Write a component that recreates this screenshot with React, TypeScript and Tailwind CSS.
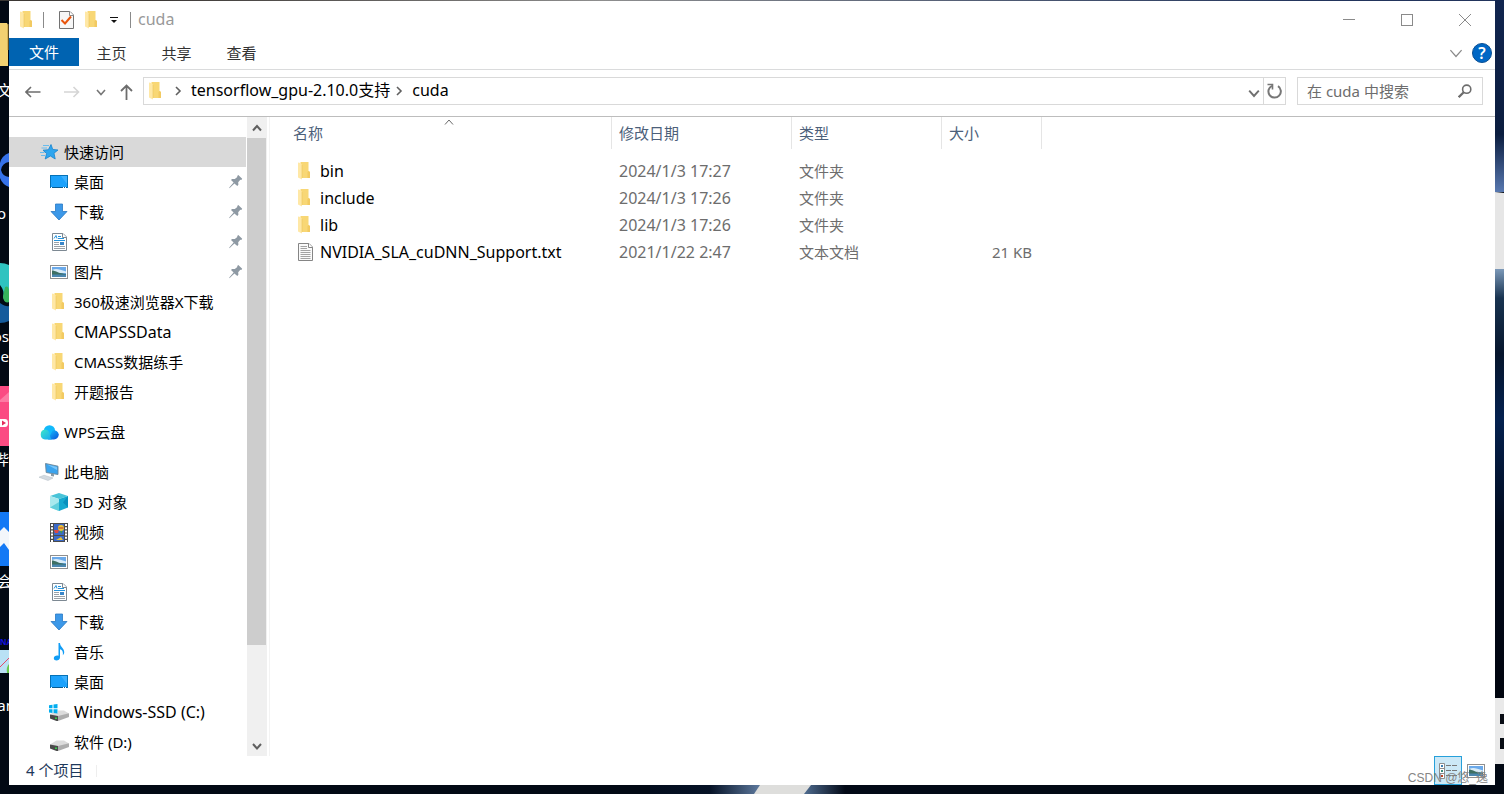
import type { ReactNode } from 'react';

type IconName =
  | 'star'
  | 'desktop'
  | 'download'
  | 'document'
  | 'picture'
  | 'folder'
  | 'cloud'
  | 'computer'
  | 'cube'
  | 'video'
  | 'music'
  | 'systemDrive'
  | 'drive';

interface NavItem {
  label: string;
  icon: IconName;
  pinned?: boolean;
  latin?: boolean;
}

interface NavGroup {
  root: NavItem;
  active?: boolean;
  children: NavItem[];
}

interface FileEntry {
  name: string;
  modified: string;
  type: string;
  size: string;
  isFolder: boolean;
}

const navGroups: NavGroup[] = [
  {
    root: { label: '快速访问', icon: 'star' },
    active: true,
    children: [
      { label: '桌面', icon: 'desktop', pinned: true },
      { label: '下载', icon: 'download', pinned: true },
      { label: '文档', icon: 'document', pinned: true },
      { label: '图片', icon: 'picture', pinned: true },
      { label: '360极速浏览器X下载', icon: 'folder' },
      { label: 'CMAPSSData', icon: 'folder', latin: true },
      { label: 'CMASS数据练手', icon: 'folder' },
      { label: '开题报告', icon: 'folder' },
    ],
  },
  { root: { label: 'WPS云盘', icon: 'cloud' }, children: [] },
  {
    root: { label: '此电脑', icon: 'computer' },
    children: [
      { label: '3D 对象', icon: 'cube' },
      { label: '视频', icon: 'video' },
      { label: '图片', icon: 'picture' },
      { label: '文档', icon: 'document' },
      { label: '下载', icon: 'download' },
      { label: '音乐', icon: 'music' },
      { label: '桌面', icon: 'desktop' },
      { label: 'Windows-SSD (C:)', icon: 'systemDrive', latin: true },
      { label: '软件 (D:)', icon: 'drive' },
    ],
  },
];

const files: FileEntry[] = [
  { name: 'bin', modified: '2024/1/3 17:27', type: '文件夹', size: '', isFolder: true },
  { name: 'include', modified: '2024/1/3 17:26', type: '文件夹', size: '', isFolder: true },
  { name: 'lib', modified: '2024/1/3 17:26', type: '文件夹', size: '', isFolder: true },
  { name: 'NVIDIA_SLA_cuDNN_Support.txt', modified: '2021/1/22 2:47', type: '文本文档', size: '21 KB', isFolder: false },
];

const ribbonTabs = ['主页', '共享', '查看'];

function FolderIcon() {
  return (
    <svg width="13" height="18" viewBox="0 0 13 18" aria-hidden="true">
      <path d="M2.5 0H10.5V9L12 10V16H3Z" fill="#f8d775" />
      <path d="M10.5 9 12 10V16H9.5V10Z" fill="#f2ca62" />
      <path d="M0 .5 2.5 1 4 3V17.5L0 15.5Z" fill="#ffe8a6" />
      <path d="M4 3V16" stroke="#e9c25c" strokeWidth=".6" />
    </svg>
  );
}

function TextFileIcon() {
  return (
    <svg width="16" height="18" viewBox="0 0 16 18" aria-hidden="true">
      <path d="M.5.5H11L14.5 4V17.5H.5Z" fill="#fafafa" stroke="#858585" />
      <path d="M10.5.5V4.5H14.5" fill="#fff" stroke="#858585" />
      <path d="M2.5 3.5H9M2.5 5.5H9M2.5 7.5H12.5M2.5 9.5H12.5M2.5 11.5H12.5M2.5 13.5H12.5M2.5 15.5H12.5" stroke="#a3a3a3" />
    </svg>
  );
}

function PictureIcon() {
  return (
    <svg width="18" height="14" viewBox="0 0 18 14" aria-hidden="true">
      <rect x=".5" y=".5" width="17" height="13" fill="#fff" stroke="#8f8f8f" />
      <rect x="2" y="2" width="14" height="10" fill="#6aa9ea" />
      <path d="M2 5C6 3 9 4 16 6.500V8H2Z" fill="#d8ebf8" />
      <path d="M2 5.500C5 5.500 8 8 14 8.700L16 9V10H2Z" fill="#3d6f63" />
      <path d="M2 9.500H16V12H2Z" fill="#4b87b0" />
    </svg>
  );
}

function DriveShape() {
  return (
    <>
      <path d="M0 11.5 6.5 7.500H14L19 10.500 7 14.500Z" fill="#dcdcdc" />
      <path d="M0 11.500 8 13V18H6.500L0 15.500Z" fill="#4a4a4a" />
      <path d="M8 13 19 10.300V14L8 18Z" fill="#adadad" />
      <rect x="5" y="14.500" width="2" height="1.500" fill="#35d04a" />
    </>
  );
}

const navIcons: Record<IconName, ReactNode> = {
  folder: (
    <span className="flex w-full pl-[2px]">
      <FolderIcon />
    </span>
  ),
  picture: <PictureIcon />,
  star: (
    <svg width="18" height="18" viewBox="0 0 18 18" aria-hidden="true">
      <path d="M11 1.5 12.7 6.4 18 7 14 10.2 15.2 16 10.4 13 5.2 16 6.6 10.5 3 7.2 8.4 6.7Z" fill="#2da5ee" stroke="#1583cf" strokeWidth=".8" />
      <path d="M3 2.500H9M1.500 5H7M0 9.500H4.500M1 12.500H5" stroke="#5bb9ef" strokeWidth=".9" />
    </svg>
  ),
  desktop: (
    <svg width="18" height="14" viewBox="0 0 18 14" aria-hidden="true">
      <rect x=".5" y=".5" width="17" height="12" fill="#1ba1fb" stroke="#0572b7" />
      <path d="M11 1H17V9Z" fill="#3cb1ff" />
      <path d="M1 12.500H17" stroke="#075a91" />
      <path d="M1 12.500H2M13 12.500H14M15 12.500H16" stroke="#fff" />
    </svg>
  ),
  download: (
    <svg width="18" height="18" viewBox="0 0 18 18" aria-hidden="true">
      <path d="M5.5 1H12.5V8.5H17L9 17 1 8.5H5.5Z" fill="#3c98e8" stroke="#2878c4" strokeWidth=".8" />
    </svg>
  ),
  document: (
    <svg width="18" height="18" viewBox="0 0 18 18" aria-hidden="true">
      <path d="M2.5.5H13L16.500 4V17.500H2.500Z" fill="#fff" stroke="#7d8993" />
      <path d="M12.500.5V4.500H16.500" fill="#fff" stroke="#7d8993" />
      <path d="M4 5.500 6 2.500 7 5.500M8 3.500H11M8 5.500H14M4 7.500H15" fill="none" stroke="#2493dc" />
      <path d="M4 9.500H9M4 11.500H9M4 13.500H15M4 15.500H15" stroke="#9aa1a7" />
      <rect x="10" y="9" width="4" height="3" fill="#3a86c8" />
    </svg>
  ),
  cloud: (
    <svg width="19" height="15" viewBox="0 0 19 15" className="shrink-0" aria-hidden="true">
      <defs>
        <linearGradient id="cloudLeft" x1="0" y1="0" x2="1" y2="1">
          <stop offset="0" stopColor="#3ce6c8" />
          <stop offset="1" stopColor="#16a7f5" />
        </linearGradient>
        <linearGradient id="cloudRight" x1="0" y1="0" x2="1" y2="1">
          <stop offset="0" stopColor="#14c3ff" />
          <stop offset="1" stopColor="#0a4fd8" />
        </linearGradient>
      </defs>
      <circle cx="9.5" cy="5.8" r="5.6" fill="#12b9fb" />
      <path d="M8 14.5 12.5 5.5A5 5 0 0 1 18.8 9.6 5 5 0 0 1 14 14.5Z" fill="url(#cloudRight)" />
      <path d="M5 4.6A5 5 0 0 0 5 14.5H12C9.8 13 10.2 9.8 9.5 8A5 5 0 0 0 5 4.6Z" fill="url(#cloudLeft)" />
    </svg>
  ),
  computer: (
    <svg width="20" height="18" viewBox="0 0 20 18" className="shrink-0" aria-hidden="true">
      <path d="M6.5.5 19 3.2V11.5L7.2 9.5Z" fill="#3ba4ee" stroke="#6b8495" strokeWidth=".9" />
      <path d="M8 1.6 18 4V7Z" fill="#79c6fa" />
      <path d="M12 10.5V13L15 13.6V11.2Z" fill="#8799a5" />
      <path d="M0 14.2 5 12.2 14 15 9 17.5Z" fill="#d3dae0" stroke="#b2bcc4" strokeWidth=".5" />
    </svg>
  ),
  cube: (
    <svg width="18" height="18" viewBox="0 0 18 18" aria-hidden="true">
      <path d="M9 0 18 3 9 6 0 3Z" fill="#48c4d8" />
      <path d="M0 3 9 6V18L0 14.5Z" fill="#a9e9ee" />
      <path d="M0 14.5 9 9V18Z" fill="#62cfdc" />
      <path d="M18 3 9 6V18L18 14.5Z" fill="#16a9cf" />
      <path d="M18 3 13 9.5 18 14.5Z" fill="#0990bd" />
    </svg>
  ),
  video: (
    <svg width="18" height="19" viewBox="0 0 18 19" aria-hidden="true">
      <rect width="18" height="19" fill="#4b4b4b" />
      <path d="M2 1V19M16 1V19" stroke="#fff" strokeWidth="2" strokeDasharray="2 1.2" />
      <rect x="4" y="1" width="10" height="11" fill="#3b69c8" />
      <rect x="4" y="13" width="10" height="5" fill="#3b69c8" />
      <circle cx="11" cy="5" r="3" fill="#e8c33a" />
      <path d="M4 7H9L8 10H5Z" fill="#d94a45" />
      <path d="M8.5 5H13.5" stroke="#c5392b" />
      <path d="M10 8H12.5L11.5 11Z" fill="#3d9b4c" />
      <path d="M6 17 11 14 13 17Z" fill="#e8c33a" />
    </svg>
  ),
  music: (
    <svg width="18" height="18" viewBox="0 0 18 18" aria-hidden="true">
      <path d="M8.5 0H10C10 4 14.5 5 14.2 9.5 14 11 13.3 11.8 12.8 12.2 13.4 8.5 12 6.8 10 6.3V14.5C10 18 3.8 18.5 3.8 15.2 3.8 12.8 6.8 12 8.5 12.8Z" fill="#129df5" />
    </svg>
  ),
  systemDrive: (
    <svg width="20" height="20" viewBox="0 0 20 20" className="shrink-0" aria-hidden="true">
      <g transform="translate(1 1)">
        <DriveShape />
      </g>
      <rect y="2" width="9" height="9" fill="#fff" />
      <path d="M0 3.2 3.5 2.7V6.3H0ZM4.5 2.5 8.5 2V6.3H4.5ZM0 7.3H3.5V11L0 10.5ZM4.5 7.3H8.5V11.5L4.5 11Z" fill="#00adef" />
    </svg>
  ),
  drive: (
    <svg width="20" height="20" viewBox="0 0 20 20" className="shrink-0" aria-hidden="true">
      <g transform="translate(1 1)">
        <DriveShape />
      </g>
    </svg>
  ),
};

function PinIcon() {
  return (
    <svg width="14" height="14" viewBox="0 0 14 14" fill="#8e99a3" aria-hidden="true">
      <path d="M9.3 0 13.2 3.8 12.3 5 11.3 4.8 9.2 7.2 9.4 9.8 8.3 11 5.4 8.4 1 12.8 0 13.2.5 12.2 4.6 7.6 2 5 3 3.9 5.8 4 8.3 1.9 8.2 1Z" />
    </svg>
  );
}

function Chevron({ direction, size = 10, stroke = '#606060', width = 1.6 }: { direction: 'up' | 'down' | 'right'; size?: number; stroke?: string; width?: number }) {
  const paths = {
    up: 'M1 7.5 5 3 9 7.5',
    down: 'M1 3 5 7.5 9 3',
    right: 'M3 1 7 5 3 9',
  };
  return (
    <svg width={size} height={size} viewBox="0 0 10 10" fill="none" stroke={stroke} strokeWidth={width} aria-hidden="true">
      <path d={paths[direction]} />
    </svg>
  );
}

function TitleBar() {
  return (
    <header className="flex h-[37px] shrink-0 items-center">
      <div className="flex flex-1 items-center pl-[11px] text-[#999999]">
        <FolderIcon />
        <span className="ml-[10px] h-4 w-px bg-[#8a8a8a]" />
        <button type="button" aria-label="属性" className="ml-[15px]">
          <svg width="15" height="18" viewBox="0 0 15 18" aria-hidden="true">
            <path d="M.5.5H11L14.5 4V17.5H.5Z" fill="#f7f7f7" stroke="#727272" />
            <path d="M10.5.5V4.5H14.5" fill="#fff" stroke="#8b8b8b" />
            <path d="M2.5 9 6 12.5 12 5.5" fill="none" stroke="#e8540c" strokeWidth="2" />
          </svg>
        </button>
        <button type="button" aria-label="新建文件夹" className="ml-[11px]">
          <FolderIcon />
        </button>
        <button type="button" aria-label="自定义快速访问工具栏" className="ml-3">
          <svg width="8" height="8" viewBox="0 0 8 8" aria-hidden="true">
            <path d="M0 1.500H8" stroke="#111" />
            <path d="M1 4H7L4 7Z" fill="#111" />
          </svg>
        </button>
        <span className="ml-3 h-4 w-px bg-[#8a8a8a]" />
        <h1 className="ml-[7px] pb-[2px] text-base leading-5">cuda</h1>
      </div>
      <div className="flex h-full pr-px text-[#8a8a8a]">
        <button type="button" aria-label="最小化" className="flex w-[58px] items-center justify-center">
          <svg width="12" height="12" viewBox="0 0 12 12" stroke="currentColor" aria-hidden="true">
            <path d="M0 5.500H12" />
          </svg>
        </button>
        <button type="button" aria-label="最大化" className="flex w-[58px] items-center justify-center">
          <svg width="12" height="12" viewBox="0 0 12 12" fill="none" stroke="currentColor" aria-hidden="true">
            <rect x=".5" y=".5" width="11" height="11" />
          </svg>
        </button>
        <button type="button" aria-label="关闭" className="flex w-[58px] items-center justify-center">
          <svg width="12" height="12" viewBox="0 0 12 12" stroke="currentColor" aria-hidden="true">
            <path d="M0 0 12 12M12 0 0 12" />
          </svg>
        </button>
      </div>
    </header>
  );
}

function Ribbon() {
  return (
    <div className="flex h-8 shrink-0 border-b border-[#dadbdc]">
      <button type="button" className="h-7 w-[70px] bg-[#0063b1] text-white">
        文件
      </button>
      {ribbonTabs.map((tab) => (
        <button key={tab} type="button" className="h-[30px] w-[65px] text-[#333333]">
          {tab}
        </button>
      ))}
      <div className="ml-auto flex h-[30px] items-center gap-[9px] pr-[3px]">
        <button type="button" aria-label="展开功能区">
          <Chevron direction="down" size={14} stroke="#8a8a8a" width={0.9} />
        </button>
        <button type="button" aria-label="帮助" className="h-5 w-5 rounded-full border border-[#0a4f94] bg-[#0067c5] text-center text-base leading-[18px] font-semibold text-white">
          ?
        </button>
      </div>
    </div>
  );
}

function AddressRow() {
  return (
    <div className="flex h-[47px] shrink-0 items-center border-b border-[#bdbdbd] pr-3 pb-1 pl-4">
      <button type="button" aria-label="后退">
        <svg width="16" height="14" viewBox="0 0 16 14" fill="none" stroke="#6d6d6d" strokeWidth="1.6" aria-hidden="true">
          <path d="M15.5 8H1M6 3 1 8 6 13" />
        </svg>
      </button>
      <button type="button" aria-label="前进" className="ml-[23px]">
        <svg width="16" height="14" viewBox="0 0 16 14" fill="none" stroke="#d5d5d5" strokeWidth="1.6" aria-hidden="true">
          <path d="M0 8H14.5M9.5 3 14.5 8 9.5 13" />
        </svg>
      </button>
      <button type="button" aria-label="最近浏览的位置" className="ml-4 pt-px">
        <Chevron direction="down" stroke="#777777" />
      </button>
      <button type="button" aria-label="上移" className="ml-[14px] pt-px">
        <svg width="13" height="16" viewBox="0 0 13 16" fill="none" stroke="#6d6d6d" strokeWidth="1.8" aria-hidden="true">
          <path d="M6.5 16V1.5M1 7 6.5 1.5 12 7" />
        </svg>
      </button>
      <nav aria-label="地址" className="ml-[10px] flex h-7 flex-1 items-center border border-[#d9d9d9] pl-[5px] text-base leading-5">
        <FolderIcon />
        <span className="ml-[10px] flex w-3 justify-center">
          <Chevron direction="right" />
        </span>
        <a href="#tensorflow" className="ml-[7px] pb-[2px] text-black">
          tensorflow_gpu-2.10.0支持
        </a>
        <span className="ml-[3px] flex w-3 justify-center">
          <Chevron direction="right" />
        </span>
        <a href="#cuda" className="ml-[7px] pb-[2px] text-black">
          cuda
        </a>
        <button type="button" aria-label="上一个位置" className="ml-auto flex h-full w-[19px] items-center justify-center pt-1">
          <Chevron direction="down" size={12} stroke="#707070" />
        </button>
        <button type="button" aria-label="刷新" className="flex h-full w-[22px] items-center justify-center border-l border-[#d9d9d9]">
          <svg width="15" height="16" viewBox="0 0 15 16" fill="none" stroke="#777777" strokeWidth="2" aria-hidden="true">
            <path d="M11 3.200A6.200 6.200 0 1 1 5 2.800" />
            <path d="M.5 1.500H5.500V6.500" strokeWidth="1.600" />
          </svg>
        </button>
      </nav>
      <label className="ml-[11px] flex h-7 w-[186px] items-center border border-[#d9d9d9] pr-[10px] pl-[9px]">
        <span className="sr-only">搜索</span>
        <input type="search" placeholder="在 cuda 中搜索" className="w-full min-w-0 bg-transparent outline-none placeholder:text-[#6d6d6d]" />
        <svg width="14" height="14" viewBox="0 0 14 14" fill="none" stroke="#6d6d6d" strokeWidth="1.6" className="shrink-0" aria-hidden="true">
          <circle cx="8.7" cy="5.2" r="4.1" />
          <path d="M5.7 8.3.7 13.2" strokeWidth="2.2" />
        </svg>
      </label>
    </div>
  );
}

function NavLink({ item, nested = false, active = false }: { item: NavItem; nested?: boolean; active?: boolean }) {
  return (
    <a
      href={`#${item.icon}`}
      className={`flex h-[30px] items-center gap-[6px] pr-[3px] text-black ${nested ? 'pl-[41px]' : 'pl-[31px]'} ${active ? 'bg-[#d9d9d9]' : ''}`}
    >
      <span className="flex w-[18px] shrink-0 justify-center">{navIcons[item.icon]}</span>
      <span className={`flex-1 whitespace-nowrap ${item.latin ? 'text-base leading-5' : ''}`}>{item.label}</span>
      {item.pinned && <PinIcon />}
    </a>
  );
}

function Sidebar() {
  return (
    <aside className="flex shrink-0 overflow-hidden border-r border-[#f3f3f3]">
      <nav aria-label="导航窗格" className="mr-px flex w-[237px] flex-col gap-[10px] pt-5">
        {navGroups.map((group) => (
          <div key={group.root.label}>
            <NavLink item={group.root} active={group.active} />
            {group.children.map((item) => (
              <NavLink key={item.label} item={item} nested />
            ))}
          </div>
        ))}
      </nav>
      <div className="mr-[2px] flex w-5 flex-col bg-[#f0f0f0]">
        <button type="button" aria-label="向上滚动" className="flex h-[21px] items-center justify-center">
          <Chevron direction="up" width={2} />
        </button>
        <div className="mr-px flex-1">
          <div className="h-[85%] bg-[#cdcdcd]" />
        </div>
        <button type="button" aria-label="向下滚动" className="flex h-[21px] items-center justify-center">
          <Chevron direction="down" width={2} />
        </button>
      </div>
    </aside>
  );
}

function FileList() {
  return (
    <main className="min-w-0 flex-1 overflow-hidden pl-4">
      <table className="w-[756px] table-fixed border-separate border-spacing-0 text-left">
        <thead>
          <tr className="h-8 text-[#4c607a]">
            <th className="relative w-[326px] border-r border-[#e5e5e5] pl-[7px] font-normal">
              名称
              <span className="absolute inset-x-0 top-0 flex justify-center">
                <Chevron direction="up" stroke="#6a6a6a" width={1} />
              </span>
            </th>
            <th className="w-[180px] border-r border-[#e5e5e5] pl-[7px] font-normal">修改日期</th>
            <th className="w-[150px] border-r border-[#e5e5e5] pl-[7px] font-normal">类型</th>
            <th className="w-[100px] border-r border-[#e5e5e5] pl-[7px] font-normal">大小</th>
          </tr>
        </thead>
        <tbody className="text-[#6d6d6d] before:block before:h-2">
          {files.map((file) => (
            <tr key={file.name} className="h-[27px]">
              <td className="pl-3 text-base leading-5 text-black">
                <span className="flex items-center gap-[6px] whitespace-nowrap">
                  <span className="flex w-4">{file.isFolder ? <FolderIcon /> : <TextFileIcon />}</span>
                  {file.name}
                </span>
              </td>
              <td className="pl-[7px] text-base leading-5">{file.modified}</td>
              <td className="pl-[7px]">{file.type}</td>
              <td className="pr-[10px] text-right">{file.size}</td>
            </tr>
          ))}
        </tbody>
      </table>
    </main>
  );
}

function StatusBar() {
  return (
    <footer className="flex h-[29px] shrink-0 items-center pl-[17px] text-[#1e395b]">
      <span className="pb-[2px]">{files.length} 个项目</span>
      <span className="ml-3 h-3 w-px bg-[#eeeeee]" />
      <div className="ml-auto flex h-full pr-[5px]">
        <button type="button" aria-label="详细信息" className="flex h-full w-7 items-center justify-center border border-[#26a0da] bg-[#cce8f6]">
          <svg width="18" height="16" viewBox="0 0 18 16" aria-hidden="true">
            <path d="M.5.5H5.500V15.500H.5ZM.5 5.500H5.500M.5 10.500H5.500" fill="#fff" stroke="#8d8d8d" />
            <path d="M7 2.500H12M13 2.500H18M7 7.500H12M13 7.500H18M7 12.500H12M13 12.500H18" stroke="#777" />
            <path d="M2 3H4" stroke="#3a7fb5" strokeWidth="2" />
            <path d="M2 8H4" stroke="#3c8c7b" strokeWidth="2" />
            <path d="M2 13H4" stroke="#c94525" strokeWidth="2" />
          </svg>
        </button>
        <button type="button" aria-label="大缩略图" className="flex h-full w-7 items-center justify-center">
          <PictureIcon />
        </button>
      </div>
    </footer>
  );
}

// Desktop shortcuts that peek out on the left of the window
function DesktopIcons() {
  return (
    <div className="absolute inset-y-0 left-0 w-[9px] overflow-hidden whitespace-nowrap text-white" aria-hidden="true">
      <svg width="9" height="794" viewBox="0 0 9 794" className="absolute top-0 left-0">
        <path d="M0 23H7L8 25V66H0Z" fill="#f3d171" />
        <path d="M8 24V50" stroke="#b6923a" />
        <path d="M0 163A14 14 0 0 1 9 153V162A9 9 0 0 0 1 170 9 9 0 0 0 9 177V187A15 15 0 0 1 0 178Z" fill="#3672ea" />
        <path d="M0 263Q5 263 9 265V302Q5 303 3 297 5 291 0 285Z" fill="#2fc3c0" />
        <path d="M5 287Q9 285 9 292V302Q4 304 3 297Z" fill="#37b45c" />
        <path d="M0 303Q6 307 9 306V321Q5 323 0 323Z" fill="#155b9c" />
        <rect y="386" width="9" height="60" fill="#fb4b83" />
        <path d="M0 400 9 392V402H0Z" fill="#fd7ba4" />
        <path d="M0 419H5Q8 419 8 423T5 427H0Z" fill="#fff" />
        <path d="M2 420.500 6 423 2 425.500Z" fill="#e22d5c" />
        <rect y="512" width="9" height="54" fill="#1479f5" />
        <path d="M0 531 4 527 9 532V550L4 543 0 547Z" fill="#f3f6fb" />
        <rect y="650" width="9" height="23" fill="#b9e1f5" />
        <path d="M0 667 9 658" stroke="#e4496a" />
        <path d="M7 673Q6 667 9 664V673Z" fill="#67c94e" />
      </svg>
      <span className="absolute top-[80px] right-[-3px]">文</span>
      <span className="absolute top-[203px] right-[3px]">o</span>
      <span className="absolute top-[326px] right-0">os</span>
      <span className="absolute top-[346px] right-0">ge</span>
      <span className="absolute top-[449px] right-0">哔</span>
      <span className="absolute top-[571px] right-[-3px]">会</span>
      <span className="absolute top-[632px] left-0 text-[8px] font-bold text-[#1010e0]">NA</span>
      <span className="absolute top-[695px] right-[-6px]">an</span>
    </div>
  );
}

// Wallpaper slices along the right and bottom edges
function Wallpaper() {
  return (
    <div className="absolute inset-0 overflow-hidden" aria-hidden="true">
      <div className="absolute inset-x-0 top-0 h-px bg-linear-to-r from-[#3b3734] from-10% via-[#8e8e8e] via-40% to-[#22345c] to-87%" />
      <svg width="9" height="794" viewBox="0 0 9 794" className="absolute top-0 right-0">
        <defs>
          <linearGradient id="edgeTop" x1="0" y1="0" x2="0" y2="1">
            <stop offset="0" stopColor="#11254f" />
            <stop offset=".7" stopColor="#0b1d3f" />
            <stop offset="1" stopColor="#5878b0" />
          </linearGradient>
          <linearGradient id="edgeMiddle" x1="0" y1="0" x2="0" y2="1">
            <stop offset="0" stopColor="#7f9cbc" />
            <stop offset=".07" stopColor="#183350" />
            <stop offset=".2" stopColor="#06152c" />
            <stop offset=".35" stopColor="#04214f" />
            <stop offset=".6" stopColor="#010a1d" />
            <stop offset="1" stopColor="#00040e" />
          </linearGradient>
        </defs>
        <rect width="9" height="192" fill="url(#edgeTop)" />
        <rect y="268" width="9" height="430" fill="url(#edgeMiddle)" />
        <path d="M0 192 9 193V269H0Z" fill="#e6e6e6" />
        <rect y="698" width="9" height="66" fill="#e9e9e9" />
        <path d="M5 714H9V724H5ZM5 738H9V749H5Z" fill="#080c14" />
      </svg>
      <svg width="300" height="9" viewBox="0 0 300 9" className="absolute bottom-0 left-[650px]">
        <defs>
          <linearGradient id="edgeBottom">
            <stop offset="0" stopColor="#030d1e" />
            <stop offset=".2" stopColor="#061226" />
            <stop offset=".37" stopColor="#5f7ba0" />
            <stop offset=".52" stopColor="#4b678a" />
            <stop offset=".65" stopColor="#020916" />
            <stop offset="1" stopColor="#020916" />
          </linearGradient>
        </defs>
        <rect width="300" height="9" fill="url(#edgeBottom)" />
        <path d="M110 0H161L154 9H104Z" fill="#dededc" />
      </svg>
    </div>
  );
}

export default function App() {
  return (
    <div className="relative h-screen overflow-hidden bg-[#020914] px-[9px] pt-px pb-[9px] font-['Noto_Sans','Noto_Sans_CJK_SC',sans-serif] text-[15px] leading-5">
      <Wallpaper />
      <DesktopIcons />
      <div className="relative flex h-full flex-col bg-white">
        <TitleBar />
        <Ribbon />
        <AddressRow />
        <div className="flex min-h-0 flex-1">
          <Sidebar />
          <FileList />
        </div>
        <StatusBar />
      </div>
      <p className="absolute right-4 bottom-2 font-['Liberation_Sans','Noto_Sans_CJK_SC',sans-serif] text-xs text-[#858585]">CSDN @悠_逸</p>
    </div>
  );
}
